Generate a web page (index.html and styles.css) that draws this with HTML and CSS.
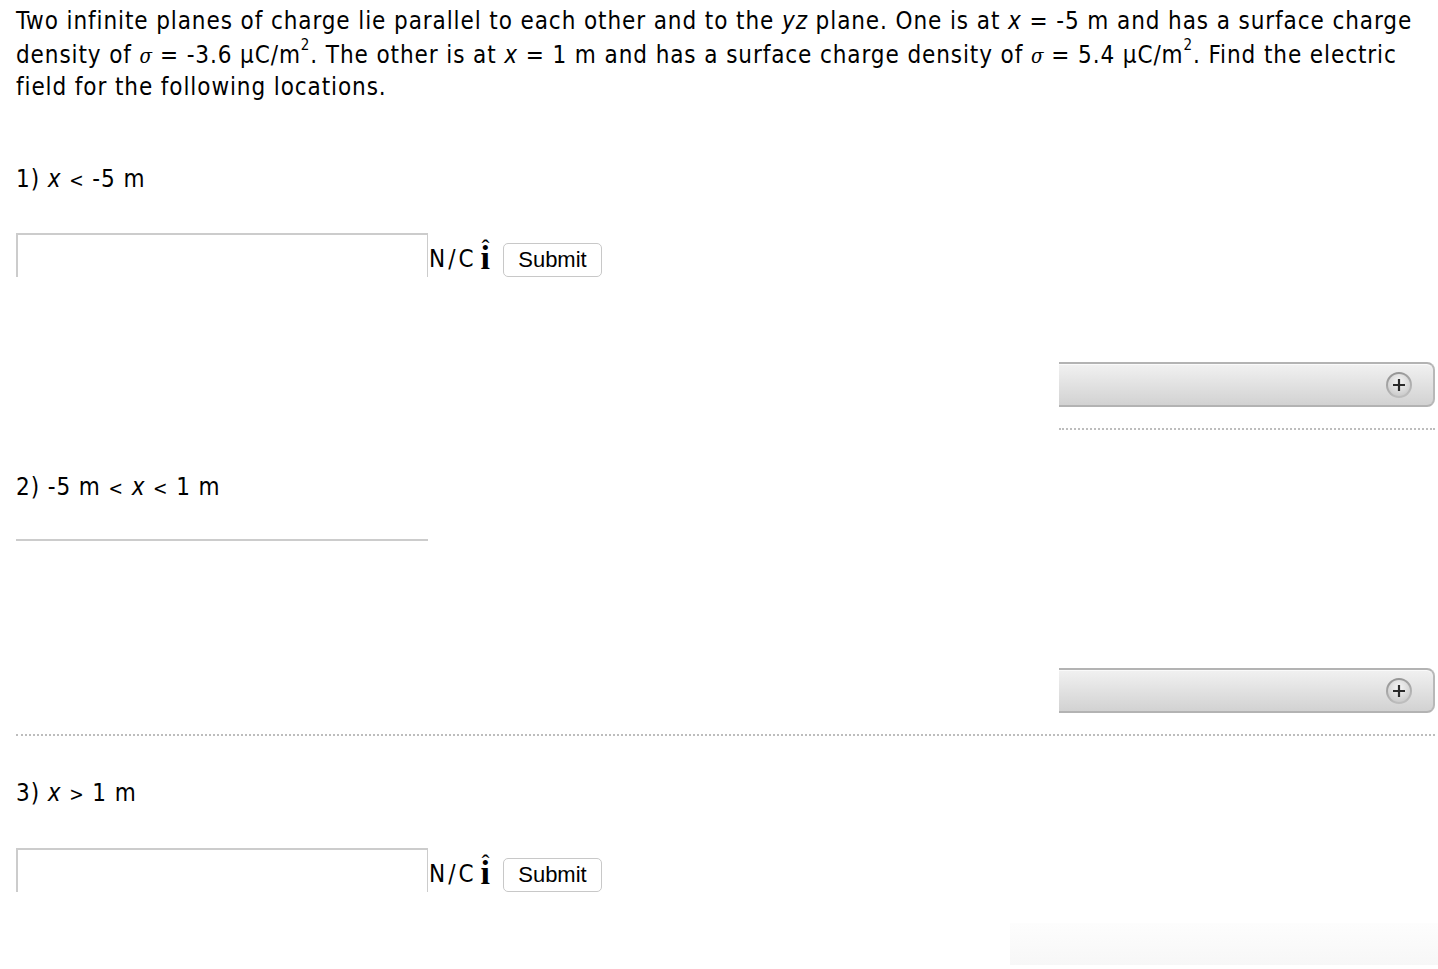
FILE: index.html
```html
<!DOCTYPE html>
<html>
<head>
<meta charset="utf-8">
<title>Planes of charge</title>
<link rel="stylesheet" href="styles.css">
</head>
<body>
<div class="page">
  <p class="question">Two infinite planes of charge lie parallel to each other and to the <i>yz</i> plane. One is at <i>x</i> = -5 m and has a surface charge density of <i class="sym">σ</i> = -3.6 μC/m<sup>2</sup>. The other is at <i>x</i> = 1 m and has a surface charge density of <i class="sym">σ</i> = 5.4 μC/m<sup>2</sup>. Find the electric field for the following locations.</p>

  <section class="part part-1">
    <div class="label">1) <i>x</i> <span class="op">&lt;</span> -5 m</div>
    <div class="answer-area">
      <div class="answer-row">
        <input class="answer-input" type="text">
        <span class="unit">N/C</span>
        <span class="ihat"><span class="hat">ˆ</span>i</span>
        <button class="submit" type="button">Submit</button>
      </div>
    </div>
    <div class="hint-bar">
      <svg class="plus" width="28" height="28" viewBox="0 0 28 28">
        <defs>
          <linearGradient id="ring1" x1="0" y1="0" x2="0.3" y2="1">
            <stop offset="0" stop-color="#8f8f8f"/>
            <stop offset="1" stop-color="#bdbdbd"/>
          </linearGradient>
          <radialGradient id="pg1" cx="50%" cy="35%" r="65%">
            <stop offset="0" stop-color="#f7f7f7"/>
            <stop offset="1" stop-color="#cbcbcb"/>
          </radialGradient>
        </defs>
        <circle cx="14" cy="14" r="13" fill="url(#ring1)"/>
        <circle cx="14" cy="14" r="11" fill="url(#pg1)"/>
        <path d="M14 8v12M8 14h12" stroke="#2a2a2a" stroke-width="2.2"/>
      </svg>
    </div>
    <div class="dots dots-right"></div>
  </section>

  <section class="part part-2">
    <div class="label">2) -5 m <span class="op">&lt;</span> <i>x</i> <span class="op">&lt;</span> 1 m</div>
    <div class="answer-area">
      <div class="answer-row collapsed">
        <input class="answer-input" type="text">
      </div>
    </div>
    <div class="hint-bar">
      <svg class="plus" width="28" height="28" viewBox="0 0 28 28">
        <defs>
          <linearGradient id="ring2" x1="0" y1="0" x2="0.3" y2="1">
            <stop offset="0" stop-color="#8f8f8f"/>
            <stop offset="1" stop-color="#bdbdbd"/>
          </linearGradient>
          <radialGradient id="pg2" cx="50%" cy="35%" r="65%">
            <stop offset="0" stop-color="#f7f7f7"/>
            <stop offset="1" stop-color="#cbcbcb"/>
          </radialGradient>
        </defs>
        <circle cx="14" cy="14" r="13" fill="url(#ring2)"/>
        <circle cx="14" cy="14" r="11" fill="url(#pg2)"/>
        <path d="M14 8v12M8 14h12" stroke="#2a2a2a" stroke-width="2.2"/>
      </svg>
    </div>
    <div class="dots"></div>
  </section>

  <section class="part part-3">
    <div class="label">3) <i>x</i> <span class="op">&gt;</span> 1 m</div>
    <div class="answer-row">
      <input class="answer-input" type="text">
      <span class="unit">N/C</span>
      <span class="ihat"><span class="hat">ˆ</span>i</span>
      <button class="submit" type="button">Submit</button>
    </div>
  </section>

  <div class="fade"></div>
</div>
</body>
</html>
```

FILE: styles.css
```css
html, body {
  margin: 0;
  padding: 0;
  background: #fff;
}

body {
  font-family: "DejaVu Sans Condensed", "DejaVu Sans", sans-serif;
  font-stretch: condensed;
  font-size: 24px;
  letter-spacing: 0.9px;
  color: #000;
  overflow: hidden;
}

.page {
  width: 1419px;
  padding-left: 16px;
  padding-top: 6px;
}

.question {
  margin: 0;
  line-height: 31px;
}

.question sup {
  font-size: 15px;
  line-height: 16px;
  vertical-align: 13px;
}

.sym {
  font-family: "DejaVu Serif", serif;
  font-size: 0.85em;
  letter-spacing: 0;
}

.op {
  font-size: 0.8em;
}

.part {
  display: flex;
  flex-direction: column;
}

.label {
  line-height: 31px;
  margin-top: 61px;
}

.part + .part .label {
  margin-top: 42px;
}

.answer-area {
  margin-top: 37px;
  height: 129px;
}

.part-2 .answer-area {
  margin-top: 35px;
}

.answer-row {
  display: flex;
  align-items: flex-end;
  height: 44px;
  overflow: hidden;
}

.answer-row.collapsed {
  height: 2px;
}

.part-3 .answer-row {
  margin-top: 38px;
}

.answer-input {
  align-self: flex-start;
  box-sizing: border-box;
  width: 412px;
  height: 60px;
  margin: 0;
  border: 2px solid #cccccc;
  border-right-width: 1px;
  background: #fff;
  flex: none;
}

.unit {
  margin-left: 1px;
  margin-bottom: 3px;
  line-height: 30px;
  letter-spacing: 3px;
}

.ihat {
  position: relative;
  margin-left: 4px;
  margin-bottom: 4px;
  font-family: "Liberation Serif", serif;
  font-weight: bold;
  font-size: 34px;
  line-height: 30px;
  letter-spacing: 0;
}

.hat {
  position: absolute;
  left: 1px;
  top: -10px;
  font-weight: normal;
  font-size: 24px;
}

.submit {
  margin-left: 13px;
  box-sizing: border-box;
  width: 99px;
  height: 34px;
  padding: 0;
  border: 1px solid #c8c8c8;
  border-radius: 5px;
  background: #fff;
  font-family: "Liberation Sans", Arial, sans-serif;
  font-size: 22px;
  letter-spacing: 0;
  color: #000;
  flex: none;
}

.hint-bar {
  box-sizing: border-box;
  margin-left: 1043px;
  width: 376px;
  height: 45px;
  border-top: 2px solid #b3b3b3;
  border-bottom: 2px solid #b3b3b3;
  border-right: 2px solid #b8b8b8;
  border-radius: 0 8px 8px 0;
  background: linear-gradient(#f1f1f1, #d2d2d2);
  box-shadow: inset 0 1px 0 #fafafa;
  display: flex;
  align-items: center;
  justify-content: flex-end;
  padding-right: 20px;
}

.plus {
  display: block;
}

.dots {
  margin-top: 21px;
  height: 0;
  border-top: 2px dotted #bdbdbd;
}

.dots-right {
  margin-left: 1043px;
}

.fade {
  margin-top: 31px;
  margin-left: 994px;
  width: 428px;
  height: 42px;
  background: linear-gradient(#fdfdfd, #f7f7f7);
}
```
